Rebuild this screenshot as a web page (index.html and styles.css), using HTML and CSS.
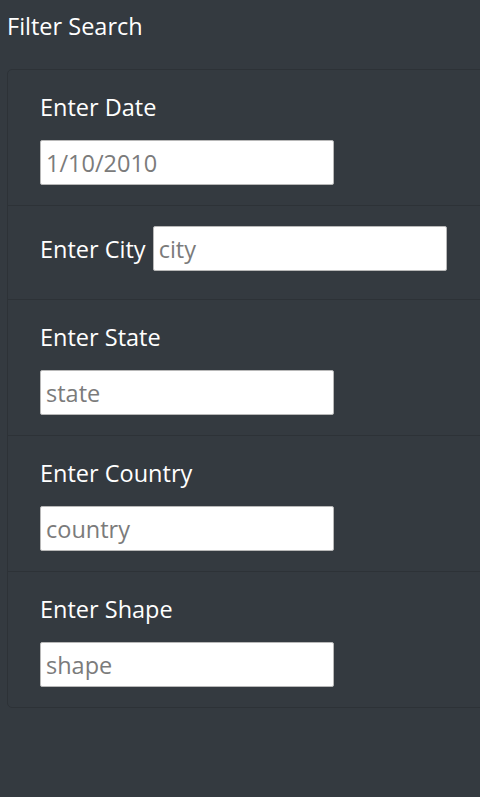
FILE: index.html
```html
<!DOCTYPE html>
<html>
<head>
<meta charset="utf-8">
<link rel="stylesheet" href="styles.css">
</head>
<body>
<div class="panel">
  <h4 class="title">Filter Search</h4>
  <ul class="filters">
    <li class="filter">
      <label class="lbl" for="datetime">Enter Date</label>
      <input class="field" id="datetime" type="text" placeholder="1/10/2010">
    </li>
    <li class="filter filter-inline">
      <label class="lbl" for="city">Enter City</label>
      <input class="field" id="city" type="text" placeholder="city">
    </li>
    <li class="filter">
      <label class="lbl" for="state">Enter State</label>
      <input class="field" id="state" type="text" placeholder="state">
    </li>
    <li class="filter">
      <label class="lbl" for="country">Enter Country</label>
      <input class="field" id="country" type="text" placeholder="country">
    </li>
    <li class="filter">
      <label class="lbl" for="shape">Enter Shape</label>
      <input class="field" id="shape" type="text" placeholder="shape">
    </li>
  </ul>
</div>
</body>
</html>
```
FILE: styles.css
```css
html, body {
  margin: 0;
  padding: 0;
  background: #343a40;
  overflow: hidden;
}
body {
  font-family: "Open Sans", "Noto Sans", sans-serif;
  color: #ffffff;
  height: 797px;
}
.panel {
  padding-left: 7px;
}
.title {
  margin: 0;
  padding-top: 9px;
  height: 69px;
  box-sizing: border-box;
  font-size: 23.5px;
  font-weight: 400;
  line-height: 34px;
}
.filters {
  list-style: none;
  margin: 0 -20px 0 0;
  padding: 0;
  border: 1px solid #2d3237;
  border-radius: 5px;
}
.filter {
  display: flex;
  flex-direction: column;
  align-items: flex-start;
  padding: 20px 32px 20px;
  border-top: 1px solid #2d3237;
}
.filter:first-child {
  border-top: none;
}
.lbl {
  font-size: 23.5px;
  line-height: 34px;
  margin-bottom: 16px;
}
.field {
  width: 294px;
  height: 45px;
  box-sizing: border-box;
  border: 1px solid #b8b8b8;
  border-radius: 2px;
  padding: 0 5px;
  font-family: inherit;
  font-size: 23.5px;
  color: #555;
  background: #fff;
  outline: none;
}
.field::placeholder {
  color: #7b7b7b;
}
.filter-inline {
  flex-direction: row;
  align-items: center;
  gap: 7px;
  padding-top: 20px;
  padding-bottom: 28px;
}
.filter-inline .lbl {
  margin-bottom: 0;
}
```
